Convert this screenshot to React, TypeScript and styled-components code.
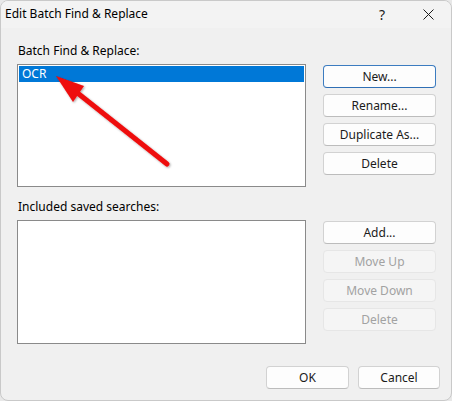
import React from "react";
import styled, { createGlobalStyle } from "styled-components";

const Global = createGlobalStyle`
  html, body { margin: 0; padding: 0; background: #e8e8e8; }
  body { font-family: "Segoe UI", "Noto Sans", sans-serif; font-size: 12px; color: #000; }
  * { box-sizing: border-box; }
`;

const Window = styled.div`
  position: relative;
  width: 452px;
  height: 401px;
  background: #f0f0f0;
  border: 1px solid #c9c9c9;
  border-radius: 8px;
  overflow: hidden;
  display: flex;
  flex-direction: column;
`;

const TitleBar = styled.div`
  height: 27px;
  background: #f3f3f3;
  display: flex;
  align-items: center;
  padding-left: 4px;
`;

const Title = styled.div`
  flex: 1;
  font-size: 12px;
  line-height: 16px;
  margin-top: -1px;
`;

const TitleButton = styled.div<{ $w: number }>`
  width: ${(p) => p.$w}px;
  height: 27px;
  display: flex;
  align-items: center;
  justify-content: center;
  font-size: 14px;
  color: #1a1a1a;
`;

const Content = styled.div`
  flex: 1;
  padding: 15px 15px 0 16px;
  display: flex;
  flex-direction: column;
`;

const Section = styled.div<{ $top: number }>`
  margin-top: ${(p) => p.$top}px;
  display: grid;
  grid-template-columns: 289px 113px;
  column-gap: 17px;
`;

const Label = styled.div`
  grid-column: 1 / 3;
  line-height: 16px;
  padding-left: 1px;
  margin-bottom: 5px;
`;

const ListBox = styled.div<{ $h: number }>`
  height: ${(p) => p.$h}px;
  background: #fff;
  border: 1px solid #8a8a8a;
  padding: 1px;
`;

const ListItem = styled.div<{ $selected?: boolean }>`
  height: 16px;
  line-height: 16px;
  padding-left: 3px;
  background: ${(p) => (p.$selected ? "#0078d7" : "transparent")};
  color: ${(p) => (p.$selected ? "#fff" : "#000")};
`;

const ButtonColumn = styled.div`
  display: flex;
  flex-direction: column;
  gap: 6px;
  padding-top: 1px;
`;

const Button = styled.button<{ $default?: boolean; $w?: number }>`
  width: ${(p) => (p.$w ? `${p.$w}px` : "100%")};
  height: 23px;
  padding: 0;
  font-family: inherit;
  font-size: 12px;
  color: ${(p) => (p.disabled ? "#a2a2a2" : "#1b1b1b")};
  background: ${(p) => (p.disabled ? "#f5f5f5" : "#fdfdfd")};
  border: 1px solid ${(p) => (p.$default ? "#3c7cc0" : p.disabled ? "#e6e6e6" : "#d2d2d2")};
  border-bottom-color: ${(p) => (p.$default ? "#2f6fb5" : p.disabled ? "#e6e6e6" : "#bcbcbc")};
  border-radius: 4px;
`;

const Footer = styled.div`
  margin-top: 22px;
  display: flex;
  justify-content: flex-end;
  gap: 9px;
  padding-right: -3px;
  margin-right: -4px;
`;

const Overlay = styled.svg`
  position: absolute;
  left: 0;
  top: 0;
  pointer-events: none;
`;

export default function App() {
  return (
    <>
      <Global />
      <Window>
        <TitleBar>
          <Title>Edit Batch Find &amp; Replace</Title>
          <TitleButton $w={46}>?</TitleButton>
          <TitleButton $w={46}>
            <svg width="11" height="11" viewBox="0 0 11 11">
              <path d="M0.5 0.5 L10.5 10.5 M10.5 0.5 L0.5 10.5" stroke="#1a1a1a" strokeWidth="1" />
            </svg>
          </TitleButton>
        </TitleBar>
        <Content>
          <Section $top={0}>
            <Label>Batch Find &amp; Replace:</Label>
            <ListBox $h={123}>
              <ListItem $selected>OCR</ListItem>
            </ListBox>
            <ButtonColumn>
              <Button $default>New...</Button>
              <Button>Rename...</Button>
              <Button>Duplicate As...</Button>
              <Button>Delete</Button>
            </ButtonColumn>
          </Section>
          <Section $top={12}>
            <Label>Included saved searches:</Label>
            <ListBox $h={124} />
            <ButtonColumn>
              <Button>Add...</Button>
              <Button disabled>Move Up</Button>
              <Button disabled>Move Down</Button>
              <Button disabled>Delete</Button>
            </ButtonColumn>
          </Section>
          <Footer>
            <Button $w={83}>OK</Button>
            <Button $w={82}>Cancel</Button>
          </Footer>
        </Content>
        <Overlay width="452" height="401" viewBox="0 0 452 401">
          <defs>
            <filter id="sh" x="-20%" y="-20%" width="140%" height="140%">
              <feDropShadow dx="1" dy="1" stdDeviation="1" floodColor="#000" floodOpacity="0.35" />
            </filter>
          </defs>
          <g filter="url(#sh)">
            <line x1="166" y1="163" x2="74" y2="90" stroke="#ee0a0a" strokeWidth="5" strokeLinecap="round" />
            <polygon points="55,75 83,85 72,101" fill="#ee0a0a" />
          </g>
        </Overlay>
      </Window>
    </>
  );
}
